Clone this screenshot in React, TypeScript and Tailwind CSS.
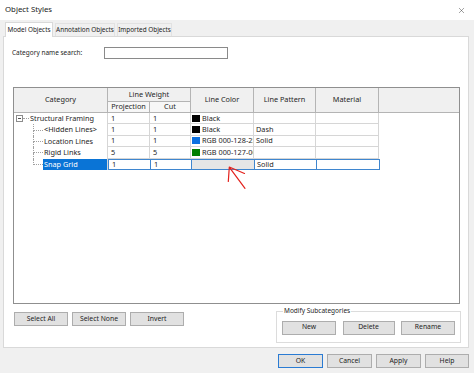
import { X } from 'lucide-react';

const font = { fontFamily: '"Noto Sans", "Liberation Sans", sans-serif' };

type Row = {
  name: string;
  proj: string;
  cut: string;
  color?: string;
  colorName?: string;
  pattern?: string;
  level: 0 | 1;
  last?: boolean;
  selected?: boolean;
};

const rows: Row[] = [
  { name: 'Structural Framing', proj: '1', cut: '1', color: '#000000', colorName: 'Black', level: 0 },
  { name: '<Hidden Lines>', proj: '1', cut: '1', color: '#000000', colorName: 'Black', pattern: 'Dash', level: 1 },
  { name: 'Location Lines', proj: '1', cut: '1', color: '#0a6fe0', colorName: 'RGB 000-128-255', pattern: 'Solid', level: 1 },
  { name: 'Rigid Links', proj: '5', cut: '5', color: '#007f00', colorName: 'RGB 000-127-000', level: 1 },
  { name: 'Snap Grid', proj: '1', cut: '1', pattern: 'Solid', level: 1, last: true, selected: true },
];

const Btn = ({ label, w = 'w-[54px]', primary = false }: { label: string; w?: string; primary?: boolean }) => (
  <button
    className={`${w} h-[14px] flex items-center justify-center text-[6.8px] leading-none text-[#222] bg-[#e1e1e1] border ${
      primary ? 'border-[#2a7bd3]' : 'border-[#adadad]'
    }`}
  >
    {label}
  </button>
);

const TreeCell = ({ row }: { row: Row }) => {
  if (row.level === 0) {
    return (
      <div className="flex items-center h-full border-r border-[#d6d6d6]">
        <div className="ml-[2px] w-[7px] h-[7px] border border-[#8c8c8c] flex items-center justify-center">
          <div className="w-[3px] h-px bg-[#505050]" />
        </div>
        <div className="w-[6px] border-t border-dotted border-[#a0a0a0]" />
        <span className="ml-[1px] text-[7.3px] leading-none text-[#262626] whitespace-nowrap">{row.name}</span>
      </div>
    );
  }
  return (
    <div className="flex items-stretch h-full border-r border-[#d6d6d6]">
      <div className="w-[19px] shrink-0" />
      <div className="w-[10px] shrink-0 flex flex-col">
        <div className="flex-1 border-l border-b border-dotted border-[#a0a0a0]" />
        <div className={`flex-1 ${row.last ? '' : 'border-l border-dotted border-[#a0a0a0]'}`} />
      </div>
      <div
        className={`flex-1 flex items-center pl-[1px] ${
          row.selected ? 'bg-[#0a74d6] text-white' : 'text-[#262626]'
        }`}
      >
        <span className="text-[7.3px] leading-none whitespace-nowrap">{row.name}</span>
      </div>
    </div>
  );
};

const DataRow = ({ row }: { row: Row }) => {
  const cell = row.selected
    ? 'border border-[#3f86cf] -mr-px'
    : 'border-r border-b border-[#d6d6d6]';
  return (
    <div className="grid grid-cols-[94px_42px_41px_63px_62px_63px_1fr] h-[11.4px] text-[#262626]">
      <TreeCell row={row} />
      <div className={`${cell} flex items-center pl-[3px] text-[7.3px] leading-none`}>{row.proj}</div>
      <div className={`${cell} flex items-center pl-[3px] text-[7.3px] leading-none`}>{row.cut}</div>
      <div
        className={`${cell} flex items-center pl-[1px] gap-[2px] overflow-hidden text-[7.3px] leading-none ${
          row.selected ? 'bg-[#e6e6e6]' : ''
        }`}
      >
        {row.color && <div className="w-[8px] h-[7px] shrink-0" style={{ background: row.color }} />}
        <span className="whitespace-nowrap">{row.colorName}</span>
      </div>
      <div className={`${cell} flex items-center pl-[2px] text-[7.3px] leading-none bg-white relative`}>{row.pattern}</div>
      <div className={`${cell}`} />
      <div />
    </div>
  );
};

export default function App() {
  return (
    <div className="w-[474px] h-[373px] bg-white overflow-hidden relative text-[#222]" style={font}>
      {/* title bar */}
      <div className="h-[20px] flex items-center justify-between pl-[5px] pr-[8px]">
        <span className="text-[7.8px] leading-none text-[#222]">Object Styles</span>
        <X size={9} strokeWidth={1.2} className="text-[#333]" />
      </div>

      <div className="h-[353px] bg-[#f0f0f0] flex flex-col">
        {/* tabs */}
        <div className="h-[16px] flex items-end pl-[5px] gap-[2px] pt-[2px]">
          <div className="h-[15px] w-[48px] bg-white border border-b-0 border-[#d9d9d9] flex items-center justify-center text-[6.4px] leading-none whitespace-nowrap -mb-px relative z-10">
            Model Objects
          </div>
          <div className="h-[13px] w-[60px] border border-b-0 border-[#e2e2e2] flex items-center justify-center text-[6.4px] leading-none whitespace-nowrap">
            Annotation Objects
          </div>
          <div className="h-[13px] w-[55px] border border-b-0 border-[#e2e2e2] flex items-center justify-center text-[6.4px] leading-none whitespace-nowrap">
            Imported Objects
          </div>
        </div>

        {/* panel */}
        <div className="ml-[3px] w-[466px] h-[312px] bg-white border border-[#d9d9d9] flex flex-col">
          <div className="flex items-center mt-[10px] pl-[8px]">
            <span className="w-[92px] text-[6.5px] leading-none text-[#262626] whitespace-nowrap">Category name search:</span>
            <div className="w-[124px] h-[12px] border border-[#8a8a8a] bg-white" />
          </div>

          {/* table */}
          <div className="ml-[9px] mt-[28px] w-[447px] h-[217px] border border-[#8f8f8f] flex flex-col">
            <div className="grid grid-cols-[94px_42px_41px_63px_62px_63px_1fr] grid-rows-[14px_11px] bg-[#f0f0f0] text-[7.3px] leading-none text-[#262626]">
              <div className="row-span-2 col-start-1 row-start-1 border-r border-b border-[#b4b4b4] flex items-center justify-center">
                Category
              </div>
              <div className="col-span-2 col-start-2 row-start-1 border-r border-b border-[#b4b4b4] flex items-center justify-center">
                Line Weight
              </div>
              <div className="col-start-2 row-start-2 border-r border-b border-[#b4b4b4] flex items-center justify-center bg-[#f7f7f7]">
                Projection
              </div>
              <div className="col-start-3 row-start-2 border-r border-b border-[#b4b4b4] flex items-center justify-center bg-[#f7f7f7]">
                Cut
              </div>
              <div className="row-span-2 col-start-4 row-start-1 border-r border-b border-[#b4b4b4] flex items-center justify-center">
                Line Color
              </div>
              <div className="row-span-2 col-start-5 row-start-1 border-r border-b border-[#b4b4b4] flex items-center justify-center">
                Line Pattern
              </div>
              <div className="row-span-2 col-start-6 row-start-1 border-r border-b border-[#b4b4b4] flex items-center justify-center">
                Material
              </div>
              <div className="row-span-2 col-start-7 row-start-1 border-b border-[#b4b4b4]" />
            </div>
            {rows.map((r) => (
              <DataRow key={r.name} row={r} />
            ))}
          </div>

          {/* lower buttons */}
          <div className="flex items-start justify-between mt-[8px] pl-[10px] pr-[7px]">
            <div className="flex gap-[4px]">
              <Btn label="Select All" />
              <Btn label="Select None" />
              <Btn label="Invert" />
            </div>
            <fieldset className="w-[185px] h-[35px] border border-[#dcdcdc] -mt-[4px] px-[5px]">
              <legend className="ml-[1px] px-[1px] text-[6.5px] leading-none text-[#262626]">Modify Subcategories</legend>
              <div className="flex justify-between mt-[6px]">
                <Btn label="New" />
                <Btn label="Delete" w="w-[52px]" />
                <Btn label="Rename" />
              </div>
            </fieldset>
          </div>
        </div>

        {/* dialog buttons */}
        <div className="flex justify-end gap-[4px] pr-[5px] mt-[6px]">
          <Btn label="OK" w="w-[45px]" primary />
          <Btn label="Cancel" w="w-[45px]" />
          <Btn label="Apply" w="w-[45px]" />
          <Btn label="Help" w="w-[44px]" />
        </div>
      </div>

      {/* red annotation arrow */}
      <svg className="absolute left-[222px] top-[160px]" width="30" height="32" viewBox="0 0 30 32" fill="none">
        <path
          d="M6.3 21.5 L7.3 7 L22.5 13.5 M7.8 7.8 L23 28.3"
          stroke="#e3211c"
          strokeWidth="1.2"
          strokeLinecap="round"
          strokeLinejoin="round"
        />
      </svg>
    </div>
  );
}
